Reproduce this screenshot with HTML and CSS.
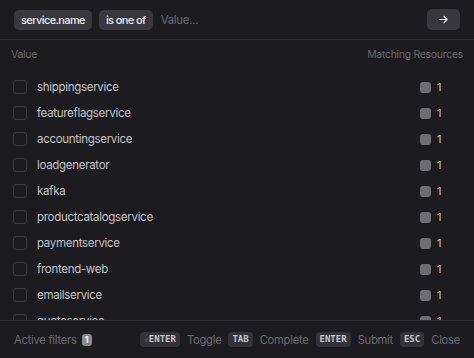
FILE: index.html
```html
<!DOCTYPE html>
<html lang="en">
<head>
    <meta charset="UTF-8">
    <meta name="viewport" content="width=device-width, initial-scale=1.0">
    <title>Filter values</title>
    <link rel="stylesheet" href="styles.css">
</head>
<body>
    <div class="panel">
        <div class="bar">
            <span class="chip">service.name</span>
            <span class="chip">is one of</span>
            <input class="value-input" type="text" placeholder="Value...">
            <button class="go">
                <svg width="11" height="11" viewBox="0 0 12 12" fill="none" stroke="currentColor" stroke-width="1.3" stroke-linecap="round" stroke-linejoin="round">
                    <path d="M2 6h8M6.5 2.5L10 6l-3.5 3.5"/>
                </svg>
            </button>
        </div>

        <div class="head">
            <span>Value</span>
            <span>Matching Resources</span>
        </div>

        <div class="list">
            <div class="row"><span class="box"></span><span class="name">shippingservice</span><span class="count"><i class="dot"></i>1</span></div>
            <div class="row"><span class="box"></span><span class="name">featureflagservice</span><span class="count"><i class="dot"></i>1</span></div>
            <div class="row"><span class="box"></span><span class="name">accountingservice</span><span class="count"><i class="dot"></i>1</span></div>
            <div class="row"><span class="box"></span><span class="name">loadgenerator</span><span class="count"><i class="dot"></i>1</span></div>
            <div class="row"><span class="box"></span><span class="name">kafka</span><span class="count"><i class="dot"></i>1</span></div>
            <div class="row"><span class="box"></span><span class="name">productcatalogservice</span><span class="count"><i class="dot"></i>1</span></div>
            <div class="row"><span class="box"></span><span class="name">paymentservice</span><span class="count"><i class="dot"></i>1</span></div>
            <div class="row"><span class="box"></span><span class="name">frontend-web</span><span class="count"><i class="dot"></i>1</span></div>
            <div class="row"><span class="box"></span><span class="name">emailservice</span><span class="count"><i class="dot"></i>1</span></div>
            <div class="row"><span class="box"></span><span class="name">quoteservice</span><span class="count"><i class="dot"></i>1</span></div>
        </div>

        <div class="foot">
            <div class="active">Active filters <span class="badge">1</span></div>
            <div class="keys">
                <kbd><small>⇧</small>ENTER</kbd><span>Toggle</span>
                <kbd>TAB</kbd><span>Complete</span>
                <kbd>ENTER</kbd><span>Submit</span>
                <kbd>ESC</kbd><span>Close</span>
            </div>
        </div>
    </div>
</body>
</html>
```

FILE: styles.css
```css
body {
    margin: 0;
    background: #1c1b20;
    font-family: Inter, 'Noto Sans', sans-serif;
    color: #b9b8bd;
}

.panel {
    height: 358px;
    display: flex;
    flex-direction: column;
    overflow: hidden;
}

.bar {
    display: flex;
    align-items: center;
    gap: 7px;
    height: 40px;
    padding: 0 14px;
    border-bottom: 1px solid #2c2b31;
    box-sizing: border-box;
    flex-shrink: 0;
}

.chip {
    background: #38373d;
    color: #ececef;
    font-size: 11px;
    font-weight: 500;
    letter-spacing: -0.6px;
    height: 20px;
    line-height: 20px;
    padding: 0 7px;
    border-radius: 5px;
}

.value-input {
    flex: 1;
    background: transparent;
    border: none;
    outline: none;
    font-family: inherit;
    font-size: 11.5px;
    letter-spacing: -0.3px;
    color: #ddd;
    padding: 0 0 0 1px;
}

.value-input::placeholder {
    color: #68676d;
}

.go {
    width: 33px;
    height: 21px;
    background: #38373d;
    border: none;
    border-radius: 5px;
    color: #e6e6ea;
    display: flex;
    align-items: center;
    justify-content: center;
    padding: 0;
}

.head {
    display: flex;
    justify-content: space-between;
    padding: 0 11px;
    height: 28px;
    align-items: center;
    font-size: 10.5px;
    letter-spacing: -0.3px;
    color: #66656b;
    flex-shrink: 0;
}

.list {
    flex: 1;
    overflow: hidden;
    padding-top: 6px;
}

.row {
    display: flex;
    align-items: center;
    height: 26px;
    padding-left: 13px;
    font-size: 11.5px;
    letter-spacing: -0.3px;
}

.box {
    width: 14px;
    height: 14px;
    border: 1px solid #3b3a40;
    border-radius: 3px;
    box-sizing: border-box;
    margin-right: 10px;
}

.name {
    flex: 1;
    color: #c3c2c7;
}

.count {
    width: 54px;
    display: flex;
    align-items: center;
    gap: 6px;
    color: #c4c3c8;
    font-size: 11px;
}

.dot {
    width: 11px;
    height: 11px;
    border-radius: 3px;
    background: #6e6d73;
}

.foot {
    flex-shrink: 0;
    height: 37px;
    border-top: 1px solid #2c2b31;
    display: flex;
    align-items: center;
    justify-content: space-between;
    padding: 0 14px;
    font-size: 11.2px;
    letter-spacing: -0.25px;
    color: #6a6970;
}

.active {
    display: flex;
    align-items: center;
    gap: 5px;
}

.badge {
    background: #8a898f;
    color: #f2f2f4;
    font-size: 9px;
    font-weight: 700;
    letter-spacing: 0;
    width: 10px;
    height: 12px;
    line-height: 12px;
    text-align: center;
    border-radius: 3px;
}

.keys {
    display: flex;
    align-items: center;
    gap: 7px;
}

kbd {
    background: #333238;
    color: #c6c5ca;
    font-family: 'DejaVu Sans Mono', monospace;
    font-weight: 700;
    font-size: 9px;
    letter-spacing: 0;
    height: 15px;
    line-height: 15px;
    padding: 0 4px;
    border-radius: 4px;
}

kbd small {
    font-size: 6px;
    color: #8a898f;
    margin-right: 1px;
}
```
